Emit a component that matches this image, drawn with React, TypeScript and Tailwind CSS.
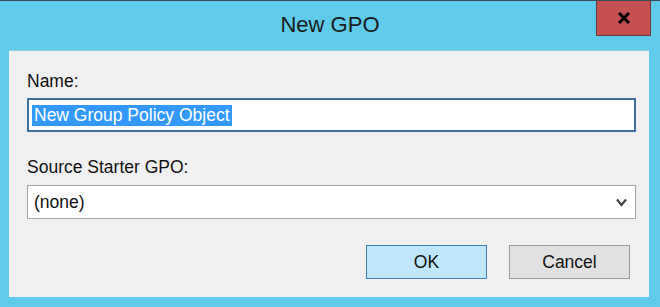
import React from "react";

const font = { fontFamily: '"Liberation Sans", Arial, sans-serif' };

const App: React.FC = () => {
  return (
    <div
      className="w-[660px] h-[307px] bg-[#5FCBEB] flex flex-col border-t border-[#3a4a55] overflow-hidden"
      style={font}
    >
      <div className="relative h-[49px] flex items-center justify-center">
        <span className="text-[22px] text-[#1b1b1b] leading-none -mt-[2px]">New GPO</span>
        <button className="absolute top-[-1px] right-[9px] w-[55px] h-[36px] bg-[#C75050] border border-[#6b3a3a] flex items-center justify-center">
          <svg width="14" height="12" viewBox="0 0 14 12">
            <path d="M2 1 L12 11 M12 1 L2 11" stroke="#000" strokeWidth="3" />
          </svg>
        </button>
      </div>

      <div className="ml-[9px] mr-[11px] h-[247px] bg-[#F0F0F0] border-t border-[#9fc9df] pl-[18px] pr-[13px] flex flex-col">
        <label className="mt-[19px] text-[17.5px] leading-[22px] text-[#111]">Name:</label>
        <div className="mt-[6px] h-[34px] border-2 border-[#3D6E9E] bg-white flex items-center pl-[3px]">
          <span className="bg-[#3399FF] text-white text-[17.5px] leading-[21px] px-[2px]">
            New Group Policy Object
          </span>
        </div>

        <label className="mt-[24px] text-[17.5px] leading-[22px] text-[#111]">Source Starter GPO:</label>
        <div className="mt-[7px] h-[34px] border border-[#A5A5A5] bg-white flex items-center justify-between pl-[6px] pr-[8px]">
          <span className="text-[17.5px] text-[#111]">(none)</span>
          <svg width="11" height="9" viewBox="0 0 11 9">
            <path d="M1 1.5 L5.5 7 L10 1.5" fill="none" stroke="#444" strokeWidth="2.2" />
          </svg>
        </div>

        <div className="mt-[26px] flex justify-end gap-[22px] pr-[6px]">
          <button className="w-[121px] h-[34px] bg-[#BEE6FD] border border-[#3C7FB1] text-[17.5px] text-[#111]">
            OK
          </button>
          <button className="w-[121px] h-[34px] bg-[#E1E1E1] border border-[#9a9a9a] text-[17.5px] text-[#111]">
            Cancel
          </button>
        </div>
      </div>
    </div>
  );
};

export default App;
